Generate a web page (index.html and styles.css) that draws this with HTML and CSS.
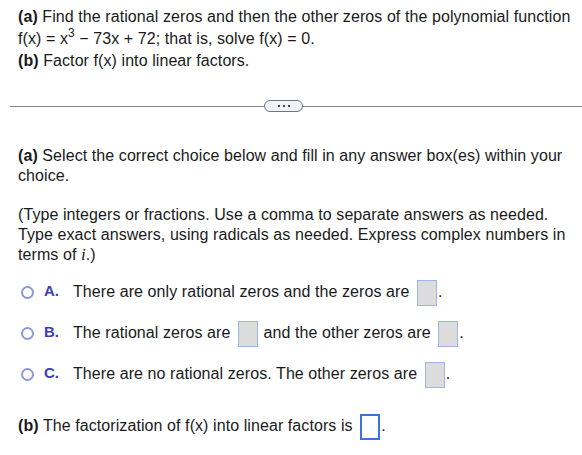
FILE: index.html
```html
<!DOCTYPE html>
<html>
<head>
<meta charset="utf-8">
<link rel="stylesheet" href="styles.css">
</head>
<body>
<div class="page">
  <div class="question">
    <p><b>(a)</b> Find the rational zeros and then the other zeros of the polynomial function</p>
    <p>f(x) = x<sup>3</sup> − 73x + 72; that is, solve f(x) = 0.</p>
    <p><b>(b)</b> Factor f(x) into linear factors.</p>
  </div>

  <div class="divider">
    <span class="rule-left"></span>
    <span class="pill"><i></i><i></i><i></i></span>
    <span class="rule-right"></span>
  </div>

  <div class="answer">
    <p class="lead"><b>(a)</b> Select the correct choice below and fill in any answer box(es) within your choice.</p>
    <p class="hint">(Type integers or fractions. Use a comma to separate answers as needed. Type exact answers, using radicals as needed. Express complex numbers in terms of <span class="imag">i</span>.)</p>

    <div class="options">
      <div class="option">
        <span class="radio"></span>
        <span class="letter">A.</span>
        <span class="text">There are only rational zeros and the zeros are <span class="box"></span>.</span>
      </div>
      <div class="option">
        <span class="radio"></span>
        <span class="letter">B.</span>
        <span class="text">The rational zeros are <span class="box"></span> and the other zeros are <span class="box"></span>.</span>
      </div>
      <div class="option">
        <span class="radio"></span>
        <span class="letter">C.</span>
        <span class="text">There are no rational zeros. The other zeros are <span class="box"></span>.</span>
      </div>
    </div>

    <p class="partb"><b>(b)</b> The factorization of f(x) into linear factors is <span class="box active"></span>.</p>
  </div>
</div>
</body>
</html>
```

FILE: styles.css
```css
html, body {
  margin: 0;
  padding: 0;
  background: #ffffff;
}

body {
  font-family: "Liberation Sans", Arial, sans-serif;
  font-size: 16px;
  letter-spacing: 0.08px;
  color: #1a1a1a;
}

p {
  margin: 0;
}

.page {
  width: 582px;
  overflow: hidden;
}

.question {
  padding: 6px 0 0 18px;
  line-height: 22px;
}

.question sup {
  font-size: 12px;
  line-height: 0;
  vertical-align: 7px;
}

.divider {
  display: flex;
  align-items: center;
  margin-top: 28px;
  padding-left: 10px;
  height: 12px;
}

.rule-left {
  width: 254px;
  height: 1px;
  background: #7b8594;
}

.rule-right {
  flex: 1;
  height: 1px;
  background: #7b8594;
}

.pill {
  display: flex;
  align-items: center;
  justify-content: center;
  gap: 3px;
  width: 39px;
  height: 12px;
  box-sizing: border-box;
  border: 1px solid #6c7687;
  border-radius: 6px;
  background: #f1f3f6;
}

.pill i {
  width: 2px;
  height: 2px;
  background: #3c4454;
}

.answer {
  padding-left: 18px;
  line-height: 20px;
}

.lead {
  margin-top: 34px;
  padding-right: 10px;
}

.hint {
  margin-top: 19px;
  padding-right: 6px;
}

.imag {
  font-family: "Liberation Serif", "Times New Roman", serif;
  font-style: italic;
  font-size: 17px;
  letter-spacing: 0;
}

.options {
  margin-top: 15px;
}

.option {
  display: flex;
  align-items: center;
  height: 26px;
  margin-bottom: 15px;
}

.radio {
  width: 13px;
  height: 13px;
  box-sizing: border-box;
  border: 2px solid #8c9ad8;
  border-radius: 50%;
  margin-left: 3px;
  margin-top: -2px;
}

.letter {
  font-size: 15px;
  font-weight: bold;
  color: #3a3eb6;
  margin-left: 10px;
  width: 29px;
  margin-top: -5px;
  letter-spacing: 0;
}

.box {
  display: inline-block;
  width: 20px;
  height: 26px;
  box-sizing: border-box;
  border: 1px solid #9db5e8;
  background: #dcdcdc;
  vertical-align: middle;
  margin: 0 1px 0 3px;
}

.box.active {
  background: #ffffff;
  border: 2px solid #3774dc;
}

.partb {
  margin-top: 26px;
}
```
